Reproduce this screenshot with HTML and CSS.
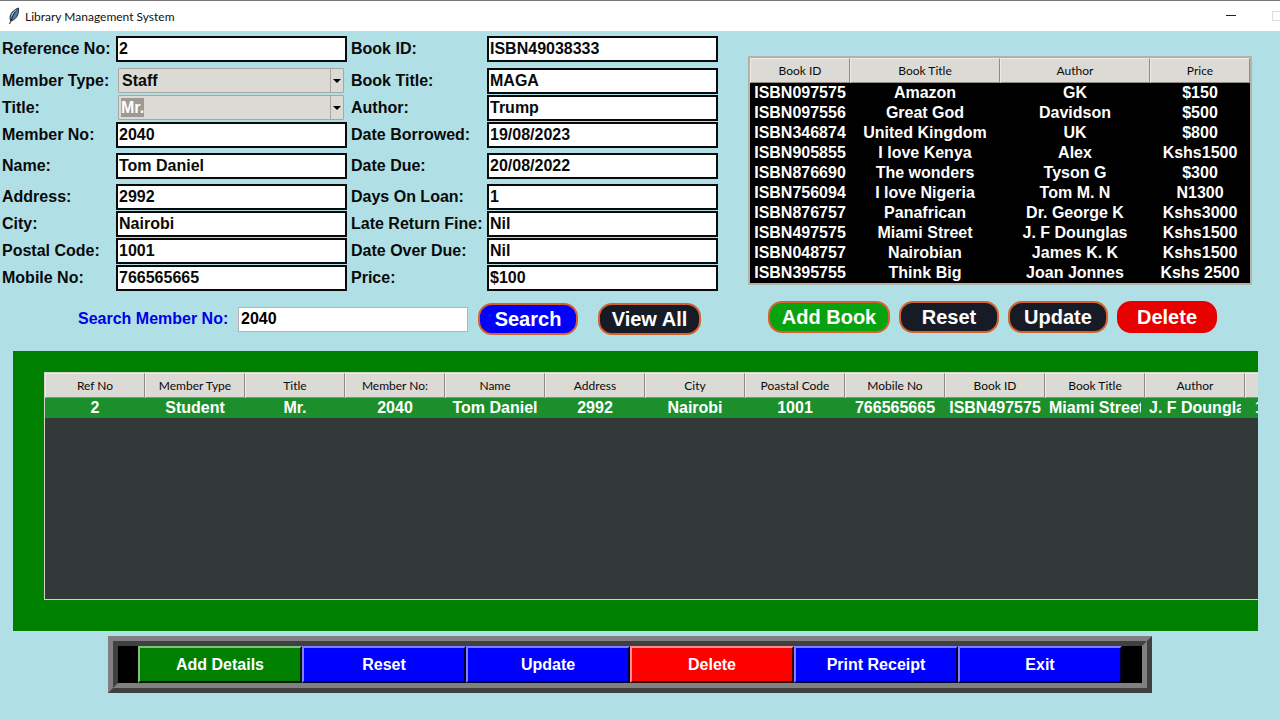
FILE: index.html
```html
<!DOCTYPE html>
<html lang="en">
<head>
    <meta charset="UTF-8">
    <meta name="viewport" content="width=device-width, initial-scale=1.0">
    <title>Library Management System</title>
    <link rel="stylesheet" href="styles.css">
</head>
<body>
    <header class="title-bar">
        <svg class="feather" width="12" height="18" viewBox="0 0 12 18" aria-hidden="true">
            <path d="M10.5 1C7 2 3 5.500 2.300 9C1.800 11.500 2.300 13 3 14C6 13 9 10.500 9.800 7.500C10.500 5 10.800 3 10.500 1Z" fill="#4f7fa8" stroke="#1c2c3c" stroke-width="1"/>
            <path d="M9.500 2.500C6.500 5 4.500 9 3 14L1.500 17" fill="none" stroke="#15202b" stroke-width="1"/>
            <path d="M8.500 3C6 4.500 4 7 3.500 9.500" fill="none" stroke="#a9cbe4" stroke-width="1"/>
        </svg>
        <h1>Library Management System</h1>
        <div class="window-controls">
            <button type="button" aria-label="Minimize">
                <svg width="12" height="12" viewBox="0 0 12 12"><path d="M1 5.500H11" stroke="#222" fill="none"/></svg>
            </button>
            <button type="button" aria-label="Maximize">
                <svg width="12" height="12" viewBox="0 0 12 12"><rect x="1.500" y="1.500" width="9" height="9" stroke="#ddd" fill="none"/></svg>
            </button>
        </div>
    </header>

    <main>
        <div class="top">
            <section class="details">
                <form class="form-grid">
                    <label for="ref">Reference No:</label>
                    <input id="ref" type="text" value="2">
                    <label for="bookId">Book ID:</label>
                    <input id="bookId" type="text" value="ISBN49038333">

                    <label for="memberType">Member Type:</label>
                    <div class="combo">
                        <select id="memberType"><option>Staff</option><option>Student</option></select>
                    </div>
                    <label for="bookTitle">Book Title:</label>
                    <input id="bookTitle" type="text" value="MAGA">

                    <label for="title">Title:</label>
                    <div class="combo">
                        <select id="title" class="selected"><option>Mr.</option><option>Mrs.</option></select>
                    </div>
                    <label for="author">Author:</label>
                    <input id="author" type="text" value="Trump">

                    <label for="memberNo">Member No:</label>
                    <input id="memberNo" type="text" value="2040">
                    <label for="borrowed">Date Borrowed:</label>
                    <input id="borrowed" type="text" value="19/08/2023">

                    <label for="name">Name:</label>
                    <input id="name" type="text" value="Tom Daniel">
                    <label for="due">Date Due:</label>
                    <input id="due" type="text" value="20/08/2022">

                    <label for="address">Address:</label>
                    <input id="address" type="text" value="2992">
                    <label for="days">Days On Loan:</label>
                    <input id="days" type="text" value="1">

                    <label for="city">City:</label>
                    <input id="city" type="text" value="Nairobi">
                    <label for="fine">Late Return Fine:</label>
                    <input id="fine" type="text" value="Nil">

                    <label for="postal">Postal Code:</label>
                    <input id="postal" type="text" value="1001">
                    <label for="overdue">Date Over Due:</label>
                    <input id="overdue" type="text" value="Nil">

                    <label for="mobile">Mobile No:</label>
                    <input id="mobile" type="text" value="766565665">
                    <label for="price">Price:</label>
                    <input id="price" type="text" value="$100">
                </form>

                <form class="search-row">
                    <label for="search">Search Member No:</label>
                    <input id="search" type="text" value="2040">
                    <button type="button" class="pill blue">Search</button>
                    <button type="button" class="pill view-all">View All</button>
                </form>
            </section>

            <section class="books">
                <div class="tree">
                    <table>
                        <colgroup><col class="narrow"><col class="wide"><col class="wide"><col class="narrow"></colgroup>
                        <thead>
                            <tr><th>Book ID</th><th>Book Title</th><th>Author</th><th>Price</th></tr>
                        </thead>
                        <tbody>
                            <tr><td>ISBN097575</td><td>Amazon</td><td>GK</td><td>$150</td></tr>
                            <tr><td>ISBN097556</td><td>Great God</td><td>Davidson</td><td>$500</td></tr>
                            <tr><td>ISBN346874</td><td>United Kingdom</td><td>UK</td><td>$800</td></tr>
                            <tr><td>ISBN905855</td><td>I love Kenya</td><td>Alex</td><td>Kshs1500</td></tr>
                            <tr><td>ISBN876690</td><td>The wonders</td><td>Tyson G</td><td>$300</td></tr>
                            <tr><td>ISBN756094</td><td>I love Nigeria</td><td>Tom M. N</td><td>N1300</td></tr>
                            <tr><td>ISBN876757</td><td>Panafrican</td><td>Dr. George K</td><td>Kshs3000</td></tr>
                            <tr><td>ISBN497575</td><td>Miami Street</td><td>J. F Dounglas</td><td>Kshs1500</td></tr>
                            <tr><td>ISBN048757</td><td>Nairobian</td><td>James K. K</td><td>Kshs1500</td></tr>
                            <tr><td>ISBN395755</td><td>Think Big</td><td>Joan Jonnes</td><td>Kshs 2500</td></tr>
                        </tbody>
                    </table>
                </div>
                <div class="book-buttons">
                    <button type="button" class="pill green">Add Book</button>
                    <button type="button" class="pill">Reset</button>
                    <button type="button" class="pill">Update</button>
                    <button type="button" class="pill red">Delete</button>
                </div>
            </section>
        </div>

        <section class="members">
            <div class="tree member-tree">
                <table>
                    <thead>
                        <tr>
                            <th>Ref No</th><th>Member Type</th><th>Title</th><th>Member No:</th><th>Name</th>
                            <th>Address</th><th>City</th><th>Poastal Code</th><th>Mobile No</th>
                            <th>Book ID</th><th>Book Title</th><th>Author</th><th>Borrowed</th>
                        </tr>
                    </thead>
                    <tbody>
                        <tr>
                            <td>2</td><td>Student</td><td>Mr.</td><td>2040</td><td>Tom Daniel</td>
                            <td>2992</td><td>Nairobi</td><td>1001</td><td>766565665</td>
                            <td>ISBN497575</td><td>Miami Street</td><td>J. F Dounglas</td><td>19/08/2023</td>
                        </tr>
                    </tbody>
                </table>
            </div>
        </section>

        <div class="toolbar">
            <div class="toolbar-inner">
                <button type="button" class="green">Add Details</button>
                <button type="button">Reset</button>
                <button type="button">Update</button>
                <button type="button" class="red">Delete</button>
                <button type="button">Print Receipt</button>
                <button type="button">Exit</button>
            </div>
        </div>
    </main>
</body>
</html>
```
FILE: styles.css
```css
* {
    margin: 0;
    padding: 0;
    box-sizing: border-box;
}

body {
    min-height: 100vh;
    background-color: #b0e0e6;
    color: #0a0a0a;
    font: bold 16px "Liberation Sans", Arial, sans-serif;
}

input, select, button {
    font: inherit;
    color: inherit;
}

/* Title bar */
.title-bar {
    display: flex;
    align-items: center;
    height: 31px;
    padding-left: 8px;
    gap: 5px;
    background-color: #fff;
    border-top: 1px solid #777;
    overflow: hidden;
}

.title-bar h1 {
    font: normal 12px Lato, "Segoe UI", sans-serif;
    color: #111;
}

.window-controls {
    display: flex;
    margin-left: auto;
    margin-right: -20px;
}

.window-controls button {
    display: flex;
    justify-content: center;
    width: 46px;
    background: none;
    border: none;
}

/* Upper half: member form and book list */
.top {
    display: grid;
    grid-template-columns: 718fr 504fr;
    column-gap: 30px;
    padding-right: 28px;
}

.form-grid {
    display: grid;
    grid-template-columns: 114px minmax(0, 1fr) 140px minmax(0, 1fr);
    grid-template-rows: 36px repeat(3, 27px) 35px repeat(4, 27px);
    align-items: center;
    padding-left: 2px;
}

.form-grid label {
    white-space: nowrap;
}

.form-grid label:nth-of-type(even) {
    padding-left: 4px;
}

.form-grid input {
    width: 100%;
    height: 26px;
    padding-left: 1px;
    background-color: #fff;
    border: 2px solid #0a0a0a;
}

.combo {
    position: relative;
    height: 25px;
    margin: 0 3px 0 2px;
}

.combo select {
    appearance: none;
    display: block;
    width: 100%;
    height: 25px;
    padding-left: 3px;
    background-color: #dcdad5;
    border: 1px solid #aaa69f;
    border-radius: 1px;
}

.combo select.selected {
    padding-left: 2px;
    color: #fff;
    background-image: linear-gradient(#9e9a91, #9e9a91);
    background-size: 23px 19px;
    background-position: 2px 2px;
    background-repeat: no-repeat;
}

/* divider and arrow of the drop-down */
.combo::before {
    content: "";
    position: absolute;
    top: 1px;
    right: 13px;
    height: 23px;
    border-left: 1px solid #aaa69f;
    pointer-events: none;
}

.combo::after {
    content: "";
    position: absolute;
    top: 11px;
    right: 3px;
    border: 4px solid transparent;
    border-top-color: #000;
    border-bottom: none;
    pointer-events: none;
}

.search-row {
    display: flex;
    align-items: center;
    margin-top: 12px;
    padding-left: 78px;
}

.search-row label {
    width: 160px;
    color: #0000e6;
}

.search-row input {
    flex: 1;
    max-width: 230px;
    min-width: 0;
    height: 25px;
    margin-right: 10px;
    padding-left: 2px;
    color: #000;
    background-color: #fff;
    border: 1px solid #b4b4b4;
}

.pill {
    width: 100px;
    height: 32px;
    font-size: 20px;
    color: #fff;
    background-color: #161b26;
    border: 2px solid #d5622b;
    border-radius: 14px;
}

.pill.view-all {
    width: 103px;
    margin-left: 20px;
}

.pill.blue {
    background-color: #0000ff;
}

.pill.green {
    width: 122px;
    background-color: #06a30f;
}

.pill.red {
    background-color: #e60000;
    border-color: #e60000;
}

.books {
    padding-top: 25px;
}

.book-buttons {
    display: flex;
    gap: 9px;
    margin-top: 16px;
    padding-left: 20px;
}

/* Tree views */
.tree {
    background-color: #000;
    border: 2px solid #b5b1a8;
    overflow: hidden;
}

.tree table {
    width: 100%;
    table-layout: fixed;
    border-collapse: separate;
    border-spacing: 0;
}

.narrow {
    width: 20%;
}

.wide {
    width: 30%;
}

.tree th {
    height: 25px;
    font: normal 12px Lato, "Segoe UI", sans-serif;
    line-height: 16px;
    background-color: #dcdad5;
    border: 1px solid #908c84;
    border-top-color: #eeebe7;
    border-left-color: #eeebe7;
    white-space: nowrap;
}

/* transparent side borders clip long values before the cell edge */
.tree td {
    height: 20px;
    line-height: 20px;
    color: #fff;
    text-align: center;
    white-space: nowrap;
    border: solid transparent;
    border-width: 0 4px;
    overflow: hidden;
}

.members {
    margin: 16px 22px 0 13px;
    padding: 21px 0 31px 31px;
    background-color: #008000;
}

.member-tree {
    height: 228px;
    background-color: #333839;
    border: 1px solid #d3d3c8;
    border-right: none;
}

.member-tree table {
    width: 1300px;
}

.member-tree td {
    background-color: #1c8f2c;
}

/* Bottom toolbar */
.toolbar {
    margin: 5px 128px 0 108px;
    border: 5px solid;
    border-color: #808080 #404040 #404040 #808080;
}

.toolbar-inner {
    display: flex;
    padding: 0 20px;
    background-color: #000;
    border: 5px solid;
    border-color: #404040 #808080 #808080 #404040;
}

.toolbar button {
    flex: 1;
    height: 37px;
    color: #fff;
    background-color: #0000ff;
    border: 2px solid;
    border-color: #7f7fff #000030 #000030 #7f7fff;
}

.toolbar button.green {
    background-color: #008000;
    border-color: #7fc07f #001800 #001800 #7fc07f;
}

.toolbar button.red {
    background-color: #ff0000;
    border-color: #ff8f8f #300000 #300000 #ff8f8f;
}
```
